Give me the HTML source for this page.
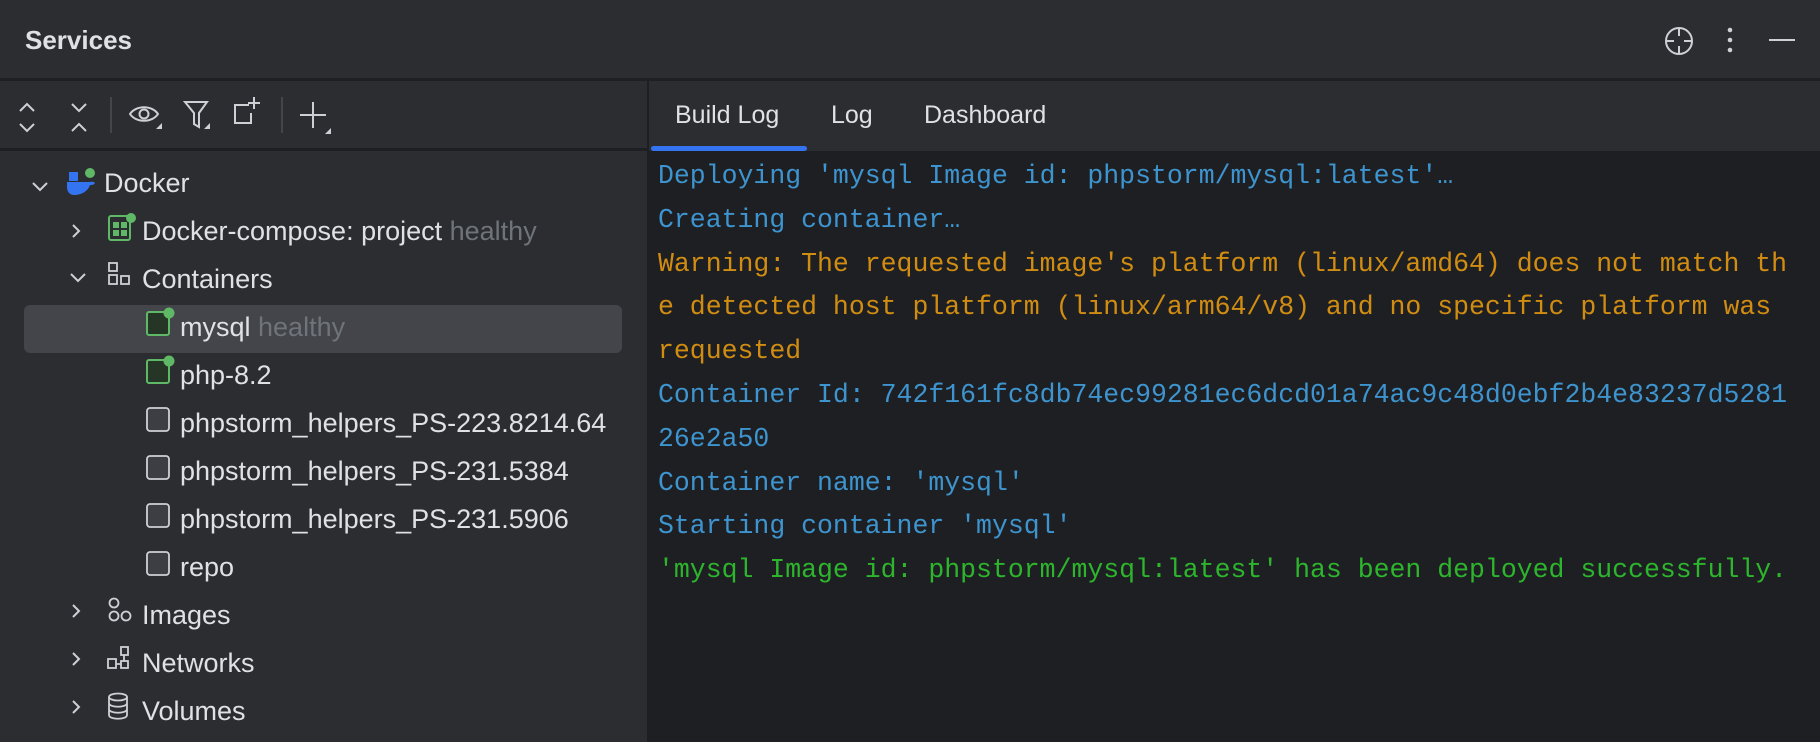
<!DOCTYPE html>
<html><head><meta charset="utf-8"><style>
*{margin:0;padding:0;box-sizing:border-box}
body{width:1820px;height:742px;background:#2b2d30;font-family:"Liberation Sans",sans-serif;color:#dfe1e5;position:relative;overflow:hidden}
.hdr{position:absolute;left:0;top:0;width:1820px;height:81px;border-bottom:3px solid #1e1f22}
.title{position:absolute;left:25px;top:25px;font-size:26px;font-weight:bold}
.left{position:absolute;left:0;top:81px;width:647px;height:661px}
.right{position:absolute;left:647px;top:81px;right:0;bottom:0;border-left:2px solid #1e1f22}
.tb{height:70px;border-bottom:3px solid #1e1f22;position:relative}
.tabs{height:70px;position:relative;background:#2b2d30}
.tab{position:absolute;top:20px;font-size:25px}
.log{position:absolute;top:70px;left:0;right:0;bottom:0;background:#1e1f22;font-family:"Liberation Mono",monospace;font-size:26.5px;padding:4px 0 0 9px;line-height:43.8px;white-space:pre}
.b{color:#3d94cf}.o{color:#d18d12}.g{color:#2db52d}
.row{position:absolute;height:48px;font-size:27px;line-height:48px}
.muted{color:#6f737a}
svg{position:absolute}
</style></head><body>
<div class="hdr"><div class="title">Services</div>
<svg style="left:1664px;top:26px" width="30" height="30" viewBox="0 0 30 30" fill="none" stroke="#ced0d6" stroke-width="2"><circle cx="15" cy="15" r="13"/><path d="M15 2v8M15 20v8M2 15h8M20 15h8"/></svg>
<svg style="left:1725px;top:26px" width="10" height="30"><circle cx="5" cy="4" r="2.3" fill="#ced0d6"/><circle cx="5" cy="14" r="2.3" fill="#ced0d6"/><circle cx="5" cy="24" r="2.3" fill="#ced0d6"/></svg>
<div style="position:absolute;left:1769px;top:39px;width:26px;height:2px;background:#ced0d6"></div>
</div>
<div class="left">
<div class="tb">
<svg style="left:12px;top:20px" width="200" height="40" fill="none" stroke="#ced0d6" stroke-width="2">
<path d="M8 10l7-7 7 7M8 23l7 7 7-7"/>
<path d="M60 3l7 7 7-7M60 30l7-7 7 7"/>
</svg>
<div style="position:absolute;left:110px;top:16px;width:2px;height:36px;background:#43454a"></div>
<svg style="left:128px;top:18px" width="40" height="40" fill="none" stroke="#ced0d6" stroke-width="2"><path d="M2 15c6-9 22-9 28 0c-6 9-22 9-28 0z"/><circle cx="16" cy="15" r="4.5"/><path d="M28 30l6-6v6z" fill="#ced0d6" stroke="none"/></svg>
<svg style="left:182px;top:18px" width="40" height="40" fill="none" stroke="#ced0d6" stroke-width="2"><path d="M3 3h22l-8 11v14l-5-3v-11z"/><path d="M22 30l6-6v6z" fill="#ced0d6" stroke="none"/></svg>
<svg style="left:232px;top:14px" width="40" height="40" fill="none" stroke="#ced0d6" stroke-width="2"><path d="M17 10h-14v18h16v-10"/><path d="M22 2v12M16 8h12"/></svg>
<div style="position:absolute;left:281px;top:16px;width:2px;height:36px;background:#43454a"></div>
<svg style="left:297px;top:18px" width="40" height="40" fill="none" stroke="#ced0d6" stroke-width="2"><path d="M16 3v26M3 16h26"/><path d="M28 35l6-6v6z" fill="#ced0d6" stroke="none"/></svg>
</div>
<div style="position:absolute;left:24px;top:224px;width:598px;height:48px;background:#43454a;border-radius:6px"></div>
<svg style="left:30px;top:94px" width="100" height="560" fill="none" stroke="#ced0d6" stroke-width="2">
<path d="M3 8l7 7 7-7"/>
<path d="M43 50l6 6-6 6"/>
<path d="M41 99l7 7 7-7"/>
<path d="M43 430l6 6-6 6"/>
<path d="M43 478l6 6-6 6"/>
<path d="M43 526l6 6-6 6"/>
</svg>
<svg style="left:66px;top:86px" width="32" height="32"><rect x="3" y="5" width="9" height="9" fill="#3574f0"/><path d="M1 15h22c2 0 4-1 6 1c-1 2-3 2-5 2c-2 6-8 10-16 10c-4 0-7-3-7-8z" fill="#3574f0"/><circle cx="24" cy="6" r="5" fill="#5fb865"/></svg>
<div class="row" style="left:104px;top:78px">Docker</div>
<svg style="left:107px;top:131px" width="32" height="32" fill="none"><rect x="2" y="4" width="21" height="24" rx="2" stroke="#5fb865" stroke-width="2"/><rect x="6" y="10" width="6" height="6" fill="#5fb865"/><rect x="14" y="10" width="6" height="6" fill="#5fb865"/><rect x="6" y="18" width="6" height="6" fill="#5fb865"/><rect x="14" y="18" width="6" height="6" fill="#5fb865"/><circle cx="24" cy="6" r="5" fill="#5fb865"/></svg>
<div class="row" style="left:142px;top:126px">Docker-compose: project <span class="muted">healthy</span></div>
<svg style="left:107px;top:179px" width="32" height="32" fill="none" stroke="#ced0d6" stroke-width="1.8"><rect x="2" y="3" width="8" height="8"/><rect x="2" y="15" width="8" height="9"/><rect x="14" y="16" width="8" height="8"/></svg>
<div class="row" style="left:142px;top:174px">Containers</div>
<svg style="left:145px;top:226px" width="34" height="82" fill="none"><rect x="2" y="5" width="22" height="23" rx="2" fill="#253627" stroke="#5fb865" stroke-width="2"/><circle cx="24" cy="6" r="5.5" fill="#5fb865"/><rect x="2" y="53" width="22" height="23" rx="2" fill="#253627" stroke="#5fb865" stroke-width="2"/><circle cx="24" cy="54" r="5.5" fill="#5fb865"/></svg>
<div class="row" style="left:180px;top:222px">mysql <span class="muted">healthy</span></div>
<div class="row" style="left:180px;top:270px">php-8.2</div>
<svg style="left:145px;top:325px" width="30" height="200" fill="#3c3e43" stroke="#ced0d6" stroke-width="1.8"><rect x="2" y="2" width="22" height="23" rx="3"/><rect x="2" y="50" width="22" height="23" rx="3"/><rect x="2" y="98" width="22" height="23" rx="3"/><rect x="2" y="146" width="22" height="23" rx="3"/></svg>
<div class="row" style="left:180px;top:318px">phpstorm_helpers_PS-223.8214.64</div>
<div class="row" style="left:180px;top:366px">phpstorm_helpers_PS-231.5384</div>
<div class="row" style="left:180px;top:414px">phpstorm_helpers_PS-231.5906</div>
<div class="row" style="left:180px;top:462px">repo</div>
<svg style="left:106px;top:515px" width="32" height="32" fill="none" stroke="#ced0d6" stroke-width="1.8"><circle cx="8" cy="7" r="4.5"/><circle cx="8" cy="20" r="4.5"/><circle cx="20" cy="20" r="4.5"/></svg>
<div class="row" style="left:142px;top:510px">Images</div>
<svg style="left:106px;top:563px" width="32" height="32" fill="none" stroke="#ced0d6" stroke-width="1.8"><rect x="15" y="3" width="7" height="8"/><rect x="2" y="15" width="8" height="9"/><rect x="15" y="17" width="7" height="7"/><path d="M18 11v6M10 20h5"/></svg>
<div class="row" style="left:142px;top:558px">Networks</div>
<svg style="left:106px;top:610px" width="32" height="34" fill="none" stroke="#ced0d6" stroke-width="1.8"><ellipse cx="12" cy="6" rx="9" ry="3.5"/><path d="M3 6v18c0 5 18 5 18 0v-18M3 12c0 5 18 5 18 0M3 18c0 5 18 5 18 0"/></svg>
<div class="row" style="left:142px;top:606px">Volumes</div>
</div>
<div class="right">
<div class="tabs">
<div class="tab" style="left:26px">Build Log</div>
<div class="tab" style="left:182px">Log</div>
<div class="tab" style="left:275px">Dashboard</div>
<div style="position:absolute;left:2px;top:65px;width:156px;height:5px;background:#3574f0;border-radius:3px"></div>
</div>
<div class="log"><span class="b">Deploying 'mysql Image id: phpstorm/mysql:latest'…
Creating container…</span>
<span class="o">Warning: The requested image's platform (linux/amd64) does not match th
e detected host platform (linux/arm64/v8) and no specific platform was
requested</span>
<span class="b">Container Id: 742f161fc8db74ec99281ec6dcd01a74ac9c48d0ebf2b4e83237d5281
26e2a50
Container name: 'mysql'
Starting container 'mysql'</span>
<span class="g">'mysql Image id: phpstorm/mysql:latest' has been deployed successfully.</span></div>
</div>
</body></html>
